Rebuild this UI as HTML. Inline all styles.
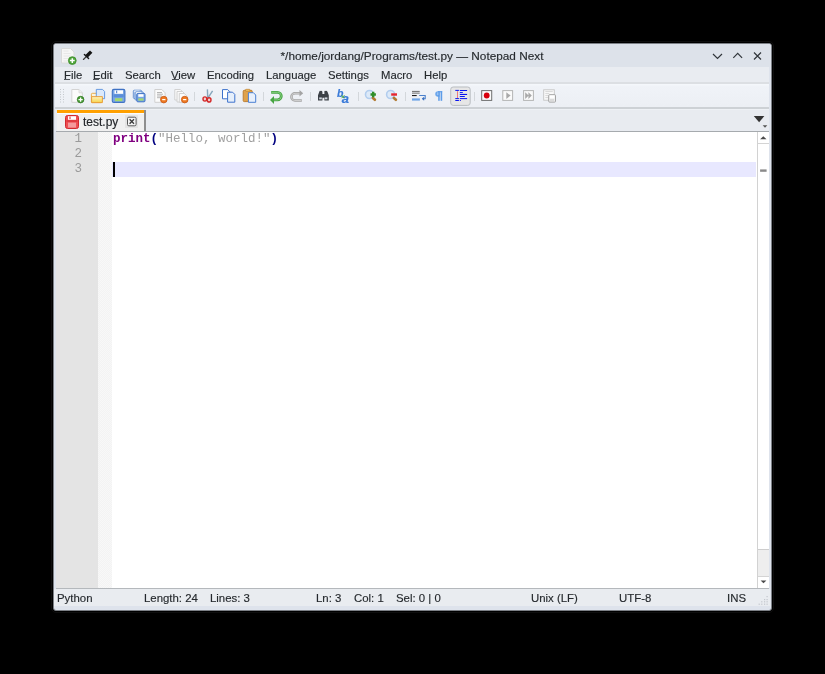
<!DOCTYPE html>
<html><head><meta charset="utf-8">
<style>
*{margin:0;padding:0;box-sizing:border-box}
html,body{width:825px;height:674px;background:#000;overflow:hidden;font-family:"Liberation Sans",sans-serif;font-size:11px;color:#31363b}
.a{position:absolute}
.t{white-space:pre;line-height:12px;color:#25292d;will-change:transform;-webkit-text-stroke:0.15px #25292d}
#win{left:53px;top:43px;width:719px;height:568px;background:#dee3ec;border:1px solid #7c8086;border-radius:3px}
#outl{left:51px;top:41px;width:723px;height:572px;border:1px solid #0e0e0e;border-radius:5px}
#title{left:54px;top:44px;width:717px;height:23px;background:#dde2ea;border-radius:2px 2px 0 0}
#menu{left:55px;top:67px;width:714px;height:15px;background:#e9ecf1}
#mline{left:55px;top:82px;width:714px;height:2px;background:#dcdfe3}
#tb{left:55px;top:84px;width:714px;height:23px;background:linear-gradient(#f4f7fb 0,#f4f7fb 1px,#f0f3f8 2px,#eceff4 22px)}
#tbline{left:55px;top:107px;width:714px;height:2px;background:#cdd1d5}
#tabbar{left:55px;top:109px;width:714px;height:22px;background:#e8ebf0;border-top:1px solid #eef1f5}
#edtop{left:56px;top:131px;width:713px;height:1px;background:#a6aaae}
#edit{left:56px;top:132px;width:701px;height:456px;background:#fff}
#lnm{left:56px;top:132px;width:42px;height:456px;background:#e4e4e4}
#fold{left:98px;top:132px;width:14px;height:456px;background:repeating-conic-gradient(#f3f3f3 0 25%,#f8f8f8 0 50%) 0 0/2px 2px}
#curline{left:112px;top:162px;width:644px;height:15px;background:#e8e8ff}
#caret{left:113px;top:162px;width:2px;height:15px;background:#000}
.ln{left:60px;margin-top:1px;width:22px;text-align:right;font-family:"Liberation Mono",monospace;font-size:12.5px;line-height:15px;color:#9a9a9a;will-change:transform}
.code{will-change:transform;font-family:"Liberation Mono",monospace;font-size:12.5px;line-height:15px;white-space:pre}
#vsb{left:757px;top:132px;width:12px;height:456px;background:#fff;border-left:1px solid #d2d2d2}
#edbot{left:56px;top:588px;width:713px;height:1px;background:#b4b8bc}
#status{left:54px;top:589px;width:716px;height:17px;background:#e9ecf0}
</style></head><body>
<div id="outl" class="a"></div>
<div id="win" class="a"></div>
<div id="title" class="a"></div>
<div class="a t" style="left:53px;top:50px;width:718px;text-align:center;font-size:11.8px;line-height:13px">*/home/jordang/Programs/test.py — Notepad Next</div>
<div id="menu" class="a"></div>
<div id="mline" class="a"></div>
<div class="a t" style="left:64px;top:69px;font-size:11.3px">File</div>
<div class="a t" style="left:93px;top:69px;font-size:11.3px">Edit</div>
<div class="a t" style="left:125px;top:69px;font-size:11.3px">Search</div>
<div class="a t" style="left:171px;top:69px;font-size:11.3px">View</div>
<div class="a t" style="left:207px;top:69px;font-size:11.3px">Encoding</div>
<div class="a t" style="left:266px;top:69px;font-size:11.3px">Language</div>
<div class="a t" style="left:328px;top:69px;font-size:11.3px">Settings</div>
<div class="a t" style="left:381px;top:69px;font-size:11.3px">Macro</div>
<div class="a t" style="left:424px;top:69px;font-size:11.3px">Help</div>
<div class="a" style="left:64px;top:79px;width:6px;height:1px;background:#50555a"></div>
<div class="a" style="left:93px;top:79px;width:6px;height:1px;background:#50555a"></div>
<div class="a" style="left:172px;top:79px;width:7px;height:1px;background:#50555a"></div>
<div id="tb" class="a"></div>
<div id="tbline" class="a"></div>
<div id="tabbar" class="a"></div>
<!-- tab -->
<div class="a" style="left:57px;top:110px;width:89px;height:21px;background:#f0f0f0;border-right:2px solid #8e8e8e"></div>
<div class="a" style="left:57px;top:110px;width:87px;height:3px;background:#ffa000"></div>
<div class="a" style="left:57px;top:113px;width:87px;height:1px;background:#f9fbfd"></div>
<div class="a t" style="left:83px;top:115px;font-size:12px;line-height:14px;color:#232629">test.py</div>
<div class="a" style="left:125px;top:115px;width:13px;height:13px;background:#e4e4e4"></div>
<div id="edtop" class="a"></div>
<div id="edit" class="a"></div>
<div id="lnm" class="a"></div>
<div id="fold" class="a"></div>
<div id="curline" class="a"></div>
<div class="a ln" style="top:131px">1</div>
<div class="a ln" style="top:146px">2</div>
<div class="a ln" style="top:161px">3</div>
<div class="a code" style="left:113px;top:132px"><b style="color:#800080">print</b><b style="color:#000080">(</b><span style="color:#a0a0a0">"Hello, world!"</span><b style="color:#000080">)</b></div>
<div id="caret" class="a"></div>
<div id="vsb" class="a"></div>
<div class="a" style="left:758px;top:143px;width:11px;height:1px;background:#d4d4d4"></div>
<div class="a" style="left:758px;top:549px;width:11px;height:1px;background:#cdcdcd"></div>
<div class="a" style="left:758px;top:550px;width:11px;height:26px;background:#eeeeee"></div>
<div class="a" style="left:758px;top:576px;width:11px;height:1px;background:#d4d4d4"></div>
<div id="edbot" class="a"></div>
<div id="status" class="a"></div>
<div class="a t" style="left:57px;top:592px;font-size:11.4px">Python</div>
<div class="a t" style="left:144px;top:592px;font-size:11.4px">Length: 24</div>
<div class="a t" style="left:210px;top:592px;font-size:11.4px">Lines: 3</div>
<div class="a t" style="left:316px;top:592px;font-size:11.4px">Ln: 3</div>
<div class="a t" style="left:354px;top:592px;font-size:11.4px">Col: 1</div>
<div class="a t" style="left:396px;top:592px;font-size:11.4px">Sel: 0 | 0</div>
<div class="a t" style="left:531px;top:592px;font-size:11.4px">Unix (LF)</div>
<div class="a t" style="left:619px;top:592px;font-size:11.4px">UTF-8</div>
<div class="a t" style="left:727px;top:592px;font-size:11.4px">INS</div>
<!--ICONS-->
<svg class="a" style="left:0;top:0" width="825" height="674" viewBox="0 0 825 674">
<!-- title app icon -->
<path d="M61.5 48.5h9l3.5 3.5v11h-12.5z" fill="#f6f6f6" stroke="#dadada" stroke-width="1"/>
<g stroke="#e4e4e4" stroke-width="0.8"><path d="M63.5 51h5M63.5 53.5h7M63.5 56h7M63.5 58.5h5M63.5 61h4"/></g>
<circle cx="72.3" cy="60.6" r="3.9" fill="#4ea53a" stroke="#3b8a2a" stroke-width="0.8"/>
<path d="M72.3 58.2v4.8M69.9 60.6h4.8" stroke="#fff" stroke-width="1.5"/>
<!-- pin -->
<path d="M83.4 59.5l3-3" stroke="#3a3a3a" stroke-width="1.1" stroke-linecap="round"/>
<path d="M84.4 54.4l4.2 4.2" stroke="#1a1a1a" stroke-width="1.4" stroke-linecap="round"/>
<path d="M86.6 56.2l4.6-4.6" stroke="#141414" stroke-width="3.4"/>
<!-- window buttons -->
<path d="M713 54l4.5 4.5 4.5-4.5" fill="none" stroke="#31363b" stroke-width="1.2"/>
<path d="M733.3 57.8l4.4-4.4 4.4 4.4" fill="none" stroke="#31363b" stroke-width="1.2"/>
<path d="M754 52.5l7 7M761 52.5l-7 7" fill="none" stroke="#31363b" stroke-width="1.2"/>
<!-- toolbar grip -->
<g fill="#c4c8cc"><rect x="60" y="89" width="1" height="1"/><rect x="63" y="89" width="1" height="1"/><rect x="60" y="91.5" width="1" height="1"/><rect x="63" y="91.5" width="1" height="1"/><rect x="60" y="94" width="1" height="1"/><rect x="63" y="94" width="1" height="1"/><rect x="60" y="96.5" width="1" height="1"/><rect x="63" y="96.5" width="1" height="1"/><rect x="60" y="99" width="1" height="1"/><rect x="63" y="99" width="1" height="1"/><rect x="60" y="101.5" width="1" height="1"/><rect x="63" y="101.5" width="1" height="1"/></g>
<!-- separators -->
<g fill="#d3d7db"><rect x="194" y="92" width="1" height="9"/><rect x="263" y="92" width="1" height="9"/><rect x="310" y="92" width="1" height="9"/><rect x="358" y="92" width="1" height="9"/><rect x="405" y="92" width="1" height="9"/><rect x="474" y="92" width="1" height="9"/></g>
<!-- new -->
<path d="M71.8 89.5h7.2l3.3 3.3v9.5h-10.5z" fill="#fbfbfb" stroke="#d4d4d4" stroke-width="1"/>
<path d="M79 89.5v3.3h3.3" fill="#eee" stroke="#d8d8d8" stroke-width="0.8"/>
<circle cx="80.6" cy="99.6" r="3.3" fill="#4a9a36" stroke="#2f7a22" stroke-width="0.8"/>
<path d="M80.6 97.5v4.2M78.5 99.6h4.2" stroke="#fff" stroke-width="1.3"/>
<!-- open -->
<defs><linearGradient id="gf" x1="0" y1="0" x2="0" y2="1"><stop offset="0" stop-color="#fff3c0"/><stop offset="1" stop-color="#f7d44a"/></linearGradient></defs>
<rect x="91.4" y="93.3" width="10.5" height="9.3" rx="1" fill="#fdf3dc" stroke="#e6a53a" stroke-width="0.9"/>
<path d="M96.3 89.4h6.2l2.1 2.1v7.2h-8.3z" fill="#dbe9fb" stroke="#5a92de" stroke-width="0.9"/>
<path d="M91.6 96.6h10.8v6h-10.8z" fill="url(#gf)" stroke="#e79a36" stroke-width="0.9"/>
<!-- save -->
<rect x="112.3" y="89.4" width="12.6" height="13" rx="1.5" fill="#7aa6e6" stroke="#3f72c4" stroke-width="1.1"/>
<rect x="114.5" y="90.3" width="8.5" height="3.5" fill="#fff"/>
<rect x="116.2" y="90.6" width="1" height="2.6" fill="#3f72c4"/>
<rect x="113.5" y="94.3" width="10.3" height="3" fill="#5a8ed8"/>
<rect x="115" y="98.2" width="7.3" height="3" fill="#a3d86e"/>
<!-- save all -->
<rect x="133.3" y="90.2" width="8.3" height="8.3" rx="1" fill="#c4d8f4" stroke="#5f8dd0" stroke-width="0.9"/>
<rect x="134.6" y="90.6" width="5" height="2" fill="#fff"/>
<rect x="135" y="91.8" width="8.3" height="8.3" rx="1" fill="#c4d8f4" stroke="#5f8dd0" stroke-width="0.9"/>
<rect x="136.3" y="92.2" width="5" height="2" fill="#fff"/>
<rect x="136.8" y="93.4" width="8.2" height="8.4" rx="1" fill="#7aa6e6" stroke="#3f72c4" stroke-width="1"/>
<rect x="138.3" y="94.2" width="5.2" height="2.6" fill="#fff"/>
<rect x="138.3" y="98.4" width="5.2" height="2.2" fill="#a3d86e"/>
<!-- close -->
<path d="M154.8 89.5h7l3.3 3.3v9.5h-10.3z" fill="#fbfbfb" stroke="#d0d0d0" stroke-width="1"/>
<g stroke="#a4a4a4" stroke-width="0.8"><path d="M157 92.5h5M157 94.2h6M157 96h5M157 97.7h4"/></g>
<circle cx="163.8" cy="99.6" r="3.3" fill="#ee7a22" stroke="#c85410" stroke-width="0.8"/>
<path d="M162.2 99.6h3.2" stroke="#fff" stroke-width="1.2"/>
<!-- close all -->
<path d="M174.8 89.5h5.5l2.5 2.5v8h-8z" fill="#fafafa" stroke="#cdcdcd" stroke-width="0.9"/>
<path d="M177 91.5h5.5l2.5 2.5v8h-8z" fill="#fafafa" stroke="#cdcdcd" stroke-width="0.9"/>
<path d="M179.3 93.5h5l2.8 2.8v6h-7.8z" fill="#fcfcfc" stroke="#cdcdcd" stroke-width="0.9"/>
<circle cx="184.7" cy="99.6" r="3.3" fill="#ee7a22" stroke="#c85410" stroke-width="0.8"/>
<path d="M183.1 99.6h3.2" stroke="#fff" stroke-width="1.2"/>
<!-- cut -->
<path d="M207.4 89.4l0.3 8.2M212.6 90.9l-4.6 7" stroke="#86a6bc" stroke-width="1.4" fill="none"/>
<ellipse cx="204.9" cy="99" rx="1.9" ry="2.1" fill="#f0d0d0" stroke="#d42a2a" stroke-width="1.4"/>
<ellipse cx="209.1" cy="99.9" rx="1.9" ry="2.1" fill="#f0d0d0" stroke="#d42a2a" stroke-width="1.4"/>
<!-- copy -->
<path d="M222.5 89.6h5.2l2.2 2.2v7h-7.4z" fill="#fff" stroke="#3d72cc" stroke-width="1"/>
<path d="M227.6 92.2h5l2.2 2.2v7.8h-7.2z" fill="#e6effb" stroke="#3d72cc" stroke-width="1"/>
<!-- paste -->
<rect x="243.2" y="90.3" width="9" height="11.3" rx="1" fill="#e0a24a" stroke="#b8782a" stroke-width="0.9"/>
<rect x="245.5" y="89.3" width="4.4" height="2" rx="0.6" fill="#f0c060" stroke="#b8782a" stroke-width="0.6"/>
<path d="M248.4 92.7h5l2.3 2.3v7.3h-7.3z" fill="#e8f0fc" stroke="#4a80d4" stroke-width="1"/>
<!-- undo -->
<path d="M271.2 92.3h6.3a3.8 3.8 0 0 1 0 7.6h-4" fill="none" stroke="#47a443" stroke-width="2.8"/>
<path d="M270 99.9l4-4v8z" fill="#47a443"/>
<path d="M271.8 92.3h5.7a3.8 3.8 0 0 1 0 7.6h-3.5" fill="none" stroke="#86cf80" stroke-width="1"/>
<!-- redo -->
<path d="M300 93.3h-5a3.5 3.5 0 0 0 0 7.2h6.8" fill="none" stroke="#a4a4a4" stroke-width="2.5"/>
<path d="M303.2 93.3l-3.7-3.3v6.6z" fill="#a4a4a4"/>
<path d="M299.5 93.3h-4.5a3.5 3.5 0 0 0 0 7.2h6.3" fill="none" stroke="#d4d4d4" stroke-width="0.9"/>
<!-- find -->
<g fill="#3c4147">
<path d="M318 95.2l1.4-3.6h3v2.3h2v-2.3h3l1.4 3.6v5.4h-4.4v-2.8h-2v2.8h-4.4z"/>
<rect x="319.6" y="90.9" width="2.4" height="1.3"/><rect x="324.6" y="90.9" width="2.4" height="1.3"/>
</g>
<g fill="#d0d6de"><rect x="319.2" y="97.4" width="2.6" height="1.9"/><rect x="324.8" y="97.4" width="2.6" height="1.9"/></g>
<!-- replace -->
<text x="337" y="96.6" font-family="Liberation Sans" font-style="italic" font-weight="bold" font-size="10.5" fill="#3a7ad8" stroke="#3a7ad8" stroke-width="0.2">b</text>
<text x="341.8" y="102.5" font-family="Liberation Sans" font-style="italic" font-weight="bold" font-size="13" fill="#3a7ad8" stroke="#3a7ad8" stroke-width="0.2">a</text>
<path d="M341.5 95.2l3 3M344.5 95.2l-3 3" stroke="#4aaa40" stroke-width="1"/>
<!-- zoom in -->
<circle cx="369.5" cy="94.5" r="4" fill="#dce9f8" stroke="#b2cdee" stroke-width="1.6"/>
<path d="M372.9 97.9l2 1.8" stroke="#b27a32" stroke-width="2.7" stroke-linecap="round"/>
<path d="M373.2 91.8v5.4M370.5 94.5h5.4" stroke="#2e8e2a" stroke-width="2.4"/>
<!-- zoom out -->
<circle cx="390.6" cy="94.5" r="4" fill="#dce9f8" stroke="#b2cdee" stroke-width="1.6"/>
<path d="M393.9 97.9l2 1.8" stroke="#b27a32" stroke-width="2.7" stroke-linecap="round"/>
<rect x="391.2" y="93.3" width="5.8" height="2.4" fill="#e8262e"/>
<!-- word wrap -->
<rect x="412" y="90.9" width="7.7" height="1.2" fill="#7a7a7a"/>
<rect x="412" y="92.6" width="7.7" height="1.2" fill="#8a8a8a"/>
<rect x="412" y="95" width="4.7" height="1.1" fill="#1e1e1e"/>
<rect x="412" y="98.4" width="7.9" height="2.2" fill="#6ea4e6"/>
<path d="M419.2 95.5h6v3.2h-2.5" fill="none" stroke="#4a80cc" stroke-width="1.1"/>
<path d="M421.8 98.7l2.3-2v4z" fill="#3a70c0"/>
<!-- pilcrow -->
<path d="M439.6 91.2v5.5h-1.6a2.75 2.75 0 0 1 0-5.5z" fill="#6aa6ec"/>
<rect x="438.2" y="91.2" width="1.5" height="9.6" fill="#5c9ce8"/>
<rect x="440.6" y="91.2" width="1.6" height="9.6" fill="#5c9ce8"/>
<rect x="438.2" y="91.2" width="4" height="1.1" fill="#5c9ce8"/>
<rect x="437.3" y="92.4" width="1" height="2.6" fill="#b0d0f6"/>
<!-- indent guide active -->
<rect x="450.7" y="87" width="19.5" height="18.4" rx="2.5" fill="#e6e6e6" stroke="#b9bdc1" stroke-width="1"/>
<g fill="#0a14f0">
<rect x="455.3" y="89.9" width="3.6" height="1"/>
<rect x="455.3" y="98.1" width="3.6" height="1"/>
<rect x="455.3" y="100" width="3.6" height="1"/>
<rect x="459.8" y="90" width="7.3" height="1"/>
<rect x="459.8" y="92" width="3" height="0.9"/>
<rect x="459.8" y="93.9" width="7.3" height="1.1"/>
<rect x="459.8" y="96" width="5" height="1"/>
<rect x="459.8" y="98.1" width="7.3" height="1"/>
<rect x="459.8" y="100" width="1" height="1"/>
</g>
<rect x="457.2" y="91.2" width="0.8" height="6.8" fill="#f06060"/>
<!-- record -->
<rect x="481.7" y="90.6" width="10" height="9.8" fill="#fafafa" stroke="#6e6e6e" stroke-width="1"/>
<circle cx="486.7" cy="95.5" r="2.9" fill="#d8000c"/>
<!-- play -->
<rect x="502.8" y="90.6" width="9.8" height="9.8" fill="#fafafa" stroke="#b4b4b4" stroke-width="1"/>
<path d="M506.3 92.3l4.3 3.3-4.3 3.3z" fill="#a8a8a8"/>
<!-- play multiple -->
<rect x="523.6" y="90.6" width="9.8" height="9.8" fill="#fafafa" stroke="#b4b4b4" stroke-width="1"/>
<path d="M525.2 92.3l3.4 3.3-3.4 3.3zM528.4 92.3l3.4 3.3-3.4 3.3z" fill="#a8a8a8"/>
<!-- save macro -->
<rect x="543.7" y="89.8" width="10.6" height="10.4" fill="#fafafa" stroke="#c4c4c4" stroke-width="0.9"/>
<g stroke="#c8c8c8" stroke-width="0.7"><path d="M545.3 91.6h7.5M545.3 93.6h4M545.3 95.6h3M545.3 97.6h3"/></g>
<rect x="548.7" y="94.7" width="6.8" height="7.4" rx="0.8" fill="#f2f2f2" stroke="#9a9a9a" stroke-width="0.9"/>
<rect x="549.8" y="95.5" width="4.6" height="2.3" fill="#fff"/>
<rect x="550" y="99" width="4.2" height="2.2" fill="#dadada"/>
<!-- tab save icon -->
<rect x="65.5" y="115.5" width="13" height="13" rx="2" fill="#ee4e52" stroke="#d22a30" stroke-width="1"/>
<rect x="68" y="116.2" width="8" height="3.6" fill="#fff"/>
<rect x="69.5" y="116.5" width="1" height="2.6" fill="#d22a30"/>
<rect x="66.5" y="120.5" width="11" height="1" fill="#d22a30"/>
<rect x="68" y="122.6" width="8" height="5" fill="#f49a9c"/>
<!-- tab close -->
<rect x="127.5" y="117.2" width="8.6" height="8.6" rx="1.3" fill="#f4f4f4" stroke="#5a5a5a" stroke-width="1"/>
<path d="M129.6 119.3l4.4 4.4M134 119.3l-4.4 4.4" stroke="#3a3a3a" stroke-width="1.3"/>
<!-- tab dropdown -->
<path d="M753.8 116h10.6l-5.3 6.2z" fill="#333"/>
<path d="M762.7 125.3h4.6l-2.3 2.4z" fill="#555"/>
<!-- scrollbar arrows -->
<path d="M760.1 139.2h6.4l-3.2-3z" fill="#4a4a4a"/>
<path d="M760.6 580.4h5.8l-2.9 2.8z" fill="#4a4a4a"/>
<rect x="760.1" y="169.4" width="6.5" height="2.4" fill="#8a8a8a"/>
<!-- size grip -->
<g fill="#c2c6cc"><rect x="766.5" y="596" width="1.2" height="1.2"/><rect x="764" y="599" width="1.2" height="1.2"/><rect x="766.5" y="599" width="1.2" height="1.2"/><rect x="761.2" y="601.2" width="1.2" height="1.2"/><rect x="764" y="601.2" width="1.2" height="1.2"/><rect x="766.5" y="601.2" width="1.2" height="1.2"/><rect x="758.6" y="603.6" width="1.2" height="1.2"/><rect x="761.2" y="603.6" width="1.2" height="1.2"/><rect x="764" y="603.6" width="1.2" height="1.2"/><rect x="766.5" y="603.6" width="1.2" height="1.2"/></g>
</svg>

</body></html>
